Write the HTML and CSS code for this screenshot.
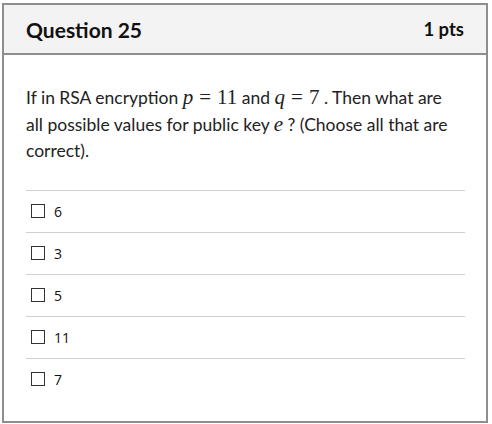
FILE: index.html
```html
<!DOCTYPE html>
<html>
<head>
<meta charset="utf-8">
<link rel="stylesheet" href="styles.css">
</head>
<body>
<div class="card">
  <div class="header">
    <span class="title">Question 25</span>
    <span class="pts">1 pts</span>
  </div>
  <div class="body">
    <p class="question">If in RSA encryption <span class="math"><i>p</i><span class="rel">=</span>11</span> and <span class="math"><i>q</i><span class="rel">=</span>7</span> . Then what are all possible values for public key <span class="math"><i>e</i></span> ? (Choose all that are correct).</p>
    <div class="answers">
      <label class="answer"><span class="box"></span><span class="label">6</span></label>
      <label class="answer"><span class="box"></span><span class="label">3</span></label>
      <label class="answer"><span class="box"></span><span class="label">5</span></label>
      <label class="answer"><span class="box"></span><span class="label">11</span></label>
      <label class="answer"><span class="box"></span><span class="label">7</span></label>
    </div>
  </div>
</div>
</body>
</html>
```
FILE: styles.css
```css
html, body {
  margin: 0;
  padding: 0;
  background: #ffffff;
}
body {
  font-family: Lato, "Open Sans", sans-serif;
  color: #2d3b45;
}
.card {
  margin: 3px 0 0 2px;
  width: 486px;
  height: 420px;
  box-sizing: border-box;
  border: 2px solid #8e8e8e;
  background: #fff;
}
.header {
  display: flex;
  justify-content: space-between;
  align-items: center;
  height: 48px;
  padding: 0 22px 0 22px;
  background: #f3f3f3;
  border-bottom: 2px solid #8e8e8e;
  color: #111;
  font-weight: 700;
}
.title {
  font-size: 21px;
}
.pts {
  font-size: 18.5px;
}
.body {
  padding: 30px 21px 0 22px;
}
.question {
  margin: 0 14px 0 0;
  font-size: 17.5px;
  line-height: 26.5px;
  color: #222;
}
.math {
  font-family: "Liberation Serif", "DejaVu Serif", serif;
  font-size: 21px;
  line-height: 20px;
}
.math i {
  font-style: italic;
}
.rel {
  margin: 0 6px;
}
.answers {
  margin-top: 25px;
}
.answer {
  display: flex;
  align-items: center;
  height: 41px;
  border-top: 1px solid #d0d0d0;
  padding-left: 5px;
}
.box {
  width: 12px;
  height: 12px;
  border: 1px solid #333;
  margin-right: 9px;
  margin-top: -1px;
  background: #fff;
}
.label {
  font-family: "Open Sans", sans-serif;
  font-size: 14px;
  color: #111;
}
```
